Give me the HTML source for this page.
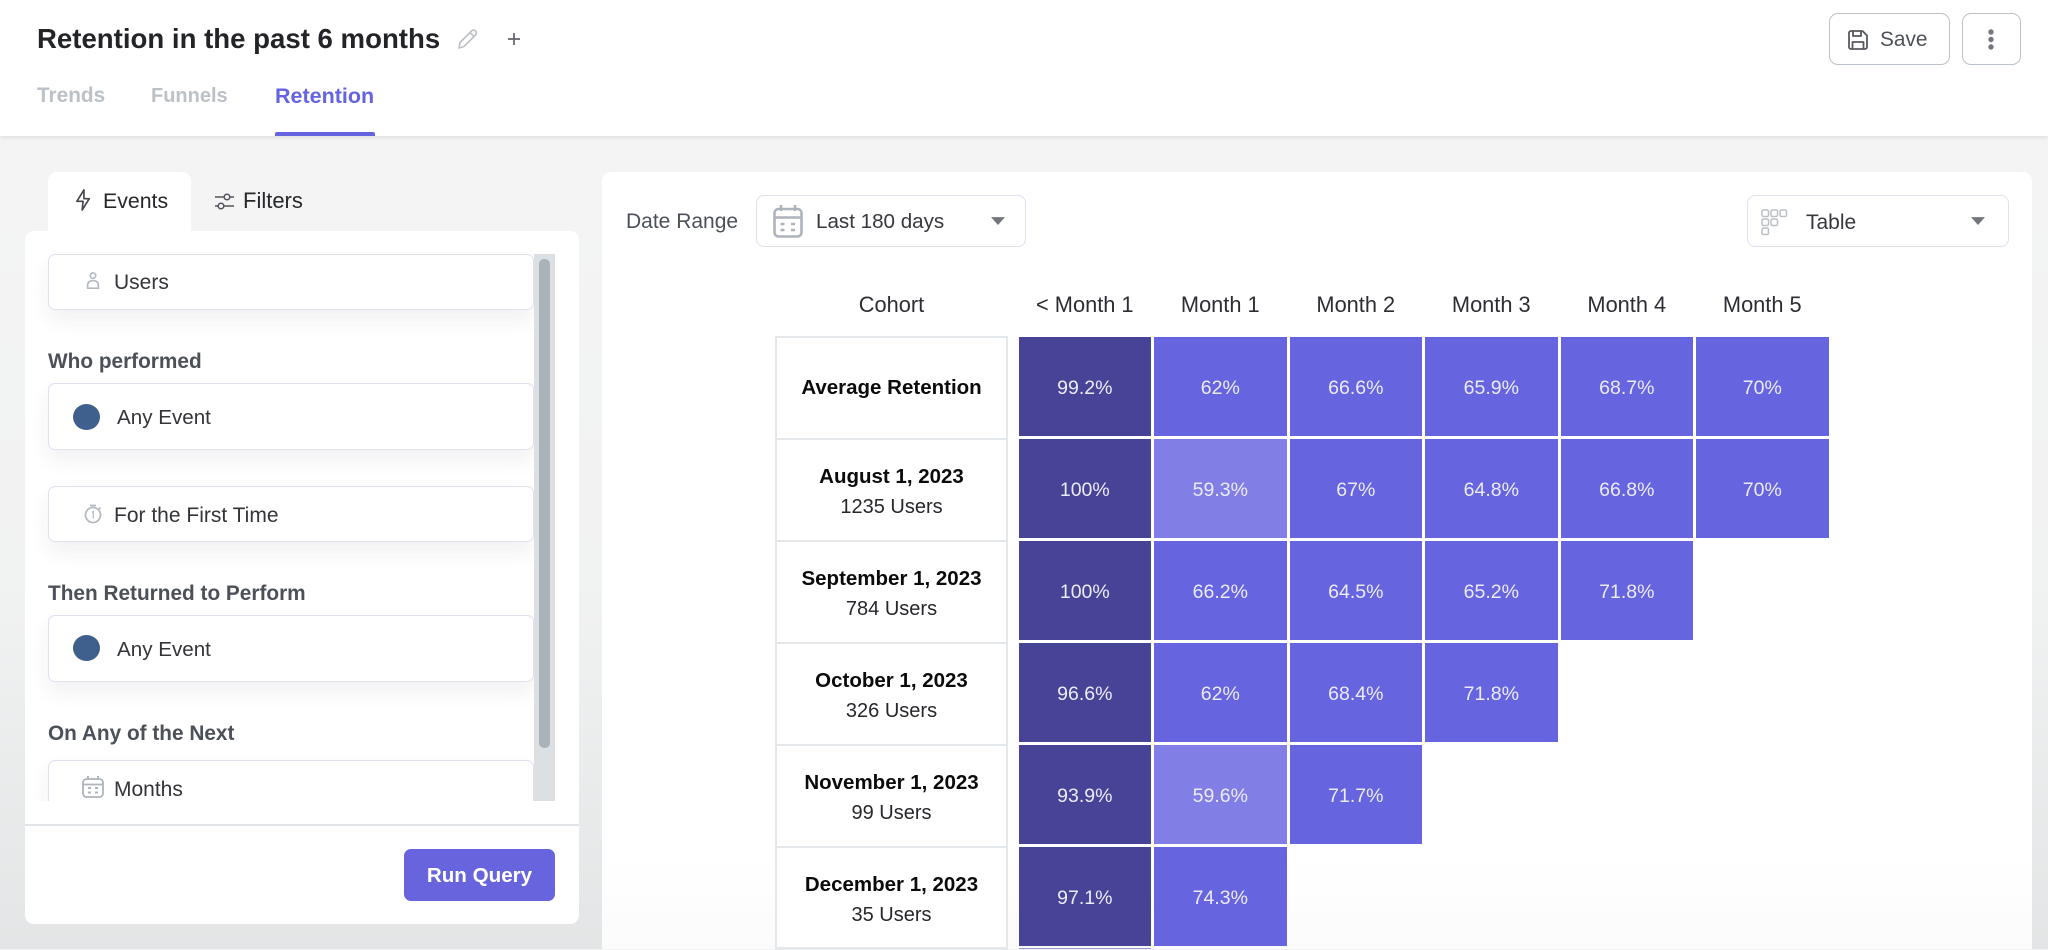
<!DOCTYPE html>
<html><head><meta charset="utf-8">
<style>
html,body{margin:0;padding:0;width:2048px;height:949px;overflow:hidden;background:#f2f3f3;font-family:"Liberation Sans",sans-serif;color:#2b2d33}
.a{position:absolute;white-space:nowrap}
.t{position:absolute;white-space:nowrap;line-height:24px;height:24px}
.box{position:absolute;left:23px;width:486px;background:#fff;border:1.500px solid #dfe1f0;border-radius:7px;box-shadow:0 10px 20px rgba(40,50,70,.065);box-sizing:border-box}
.lbl{font-size:20.800px;color:#4c5159;font-weight:bold;left:48px}
.v{font-size:21px;color:#33353a}
.c{position:absolute;width:132.6px;height:98.7px;line-height:103px;text-align:center;color:#ecebfb;font-size:19.5px;background:#6664de}
.d{background:#474497}
.l{background:#817fe5}
.co{position:absolute;left:775px;width:233px;height:103.9px;box-sizing:border-box;border:2px solid #e5e8ea;background:#fff;text-align:center;color:#000;font-size:20px;padding-top:21.500px;line-height:30px}
.co b{font-weight:bold;display:block;color:#0b0b0b;font-size:20.500px}
.co span{color:#25272b}
.h{position:absolute;top:293px;width:132.6px;text-align:center;font-size:21.800px;line-height:24px;color:#2c2e33}
svg{position:absolute;overflow:visible}
</style></head>
<body>
<div class="a" style="left:0;top:136px;width:2048px;height:813px;background:linear-gradient(to bottom,#f4f4f4 0%,#f1f2f2 55%,#e3e5e6 100%)"></div>
<!-- header -->
<div class="a" style="left:0;top:0;width:2048px;height:136px;background:#fff;box-shadow:0 2px 4px rgba(0,0,0,.08)"></div>
<div class="t" style="left:37px;top:25px;height:28px;line-height:28px;font-size:27.600px;font-weight:bold;color:#222428">Retention in the past 6 months</div>
<svg style="left:458px;top:29px" width="20" height="20" viewBox="0 0 20 20" fill="none" stroke="#bcc1c7" stroke-width="1.600" stroke-linejoin="round"><path d="M1 19l1-5.500L13.500 2c1.200-1.200 2.800-1.200 4 0s1.200 2.800 0 4L6 17.500z"/><path d="M12 3.500l4.500 4.500"/></svg>
<svg style="left:508px;top:33px" width="12" height="12" viewBox="0 0 12 12" stroke="#5f646b" stroke-width="1.700"><path d="M6 0v12M0 6h12"/></svg>
<div class="t" style="left:37px;top:84px;font-size:20.800px;font-weight:bold;color:#bcc1c8">Trends</div>
<div class="t" style="left:151px;top:84px;font-size:20px;font-weight:bold;color:#bcc1c8">Funnels</div>
<div class="t" style="left:275px;top:84px;font-size:21.500px;font-weight:bold;color:#6563e0">Retention</div>
<div class="a" style="left:275px;top:132px;width:100px;height:4px;background:#6563e0;border-radius:2px 2px 0 0"></div>
<!-- buttons -->
<div class="a" style="left:1829px;top:13px;width:121px;height:52px;box-sizing:border-box;border:1.500px solid #bcc2c9;border-radius:9px;background:#fff"></div>
<svg style="left:1848px;top:30px" width="20" height="20" viewBox="0 0 20 20" fill="none" stroke="#55595f" stroke-width="1.8" stroke-linejoin="round"><path d="M1 3a2 2 0 0 1 2-2h11.500L19 5.500V17a2 2 0 0 1-2 2H3a2 2 0 0 1-2-2z"/><path d="M5 1v5h8V1M4.500 19v-7h11v7"/></svg>
<div class="t" style="left:1880px;top:28px;font-size:20.800px;color:#4d5158">Save</div>
<div class="a" style="left:1962px;top:13px;width:59px;height:52px;box-sizing:border-box;border:1.500px solid #bcc2c9;border-radius:9px;background:#fff"></div>
<svg style="left:1985px;top:28px" width="12" height="24" viewBox="0 0 12 24" fill="#73777d"><circle cx="6" cy="4" r="2.700"/><circle cx="6" cy="11.500" r="2.700"/><circle cx="6" cy="19" r="2.700"/></svg>
<!-- left panel -->
<div class="a" style="left:48px;top:172px;width:143px;height:60px;background:#fff;border-radius:9px 9px 0 0"></div>
<div class="a" style="left:25px;top:231px;width:554px;height:693px;background:#fff;border-radius:9px"></div>
<svg style="left:76px;top:189px" width="15" height="22" viewBox="0 0 17 25" fill="none" stroke="#44484e" stroke-width="1.900" stroke-linejoin="round"><path d="M9 1L1 14h7l-1 10 8-13H9z"/></svg>
<div class="t" style="left:103px;top:189px;font-size:21.300px;color:#26282c">Events</div>
<svg style="left:215px;top:192px" width="19" height="20" viewBox="0 0 19 20" fill="none" stroke="#50545a" stroke-width="1.500"><path d="M0 5h9M15 5h4M0 14h3M9 14h10"/><circle cx="12" cy="5" r="2.800"/><circle cx="6" cy="14" r="2.800"/></svg>
<div class="t" style="left:243px;top:189px;font-size:22px;color:#26282c">Filters</div>

<div class="a" style="left:25px;top:254px;width:530px;height:547px;overflow:hidden">
 <div class="a" style="left:509px;top:0;width:21px;height:547px;background:#dde0e3"></div>
 <div class="a" style="left:514px;top:5px;width:11px;height:489px;background:#aab2ba;border-radius:5px"></div>
</div>
<div class="a" style="left:25px;top:254px;width:509px;height:547px;overflow:hidden">
 <div class="box" style="top:0;height:56px"></div>
 <div class="box" style="top:129px;height:67px"></div>
 <div class="box" style="top:232px;height:56px"></div>
 <div class="box" style="top:361px;height:67px"></div>
 <div class="box" style="top:506px;height:60px"></div>
</div>
<svg style="left:86px;top:272px" width="14" height="18" viewBox="0 0 15 20" fill="none" stroke="#b6bbc2" stroke-width="1.900"><circle cx="7.500" cy="4" r="3"/><path d="M1.500 18v-3.500C1.500 11.500 4 9.500 7.500 9.500s6 2 6 5V18z"/></svg>
<div class="t v" style="left:114px;top:271px">Users</div>
<div class="t lbl" style="top:350px">Who performed</div>
<div class="a" style="left:73px;top:404px;width:27px;height:26px;border-radius:50%;background:#3f5f8c"></div>
<div class="t v" style="left:117px;top:406px;font-size:20.600px">Any Event</div>
<svg style="left:84px;top:504px" width="18" height="20" viewBox="0 0 18 20" fill="none" stroke="#b6bbc2" stroke-width="1.800"><circle cx="9" cy="11" r="7.500"/><path d="M6 1.500h6M15 3.500l1.500 1.500" /><path d="M8 8.500l1.300-1v7" stroke-width="1.300"/></svg>
<div class="t v" style="left:114px;top:504px">For the First Time</div>
<div class="t lbl" style="top:582px">Then Returned to Perform</div>
<div class="a" style="left:73px;top:635px;width:27px;height:26px;border-radius:50%;background:#3f5f8c"></div>
<div class="t v" style="left:117px;top:638px;font-size:20.600px">Any Event</div>
<div class="t lbl" style="top:722px">On Any of the Next</div>
<svg style="left:82px;top:776px" width="22" height="22" viewBox="0 0 22 22" fill="none" stroke="#aeb4bc" stroke-width="1.800"><rect x="1" y="3" width="20" height="18" rx="3.500"/><path d="M1 8.500h20M6 0v4M16 0v4"/><path d="M6 12h3M13 12h3M6 16.500h3M13 16.500h3" stroke-width="2"/></svg>
<div class="t v" style="left:114px;top:778px">Months</div>
<div class="a" style="left:25px;top:824px;width:554px;height:1.500px;background:#e2e5e8"></div>
<div class="a" style="left:404px;top:849px;width:151px;height:52px;border-radius:7px;background:#6764dd;color:#fff;font-size:20.600px;line-height:53px;text-align:center;font-weight:bold">Run Query</div>

<!-- right panel -->
<div class="a" style="left:602px;top:172px;width:1430px;height:777px;background:linear-gradient(to bottom,#fff 88%,#fbfbfb 100%);border-radius:9px 9px 0 0"></div>
<div class="t" style="left:626px;top:210px;font-size:21px;color:#4c5159">Date Range</div>
<div class="a" style="left:756px;top:195px;width:270px;height:52px;box-sizing:border-box;border:1.500px solid #dfe1f0;border-radius:8px"></div>
<svg style="left:773px;top:205px" width="30" height="33" viewBox="0 0 30 33" fill="none" stroke="#aeb4bc" stroke-width="2.600"><rect x="1.500" y="4" width="27" height="27.500" rx="4"/><path d="M1.500 12.500h27M8 0v6M22 0v6"/><path d="M7.500 19h4M18 19h4M7.500 25h4M18 25h4" stroke-width="2.600"/></svg>
<div class="t" style="left:816px;top:210px;font-size:20.600px;color:#36383d">Last 180 days</div>
<svg style="left:991px;top:217px" width="14" height="8" viewBox="0 0 16 9" fill="#73777d"><path d="M0 0h16L8 9z"/></svg>
<div class="a" style="left:1747px;top:195px;width:262px;height:52px;box-sizing:border-box;border:1.500px solid #dfe1f0;border-radius:8px"></div>
<svg style="left:1761px;top:209px" width="27" height="26" viewBox="0 0 27 26" fill="none" stroke="#bcc0c6" stroke-width="1.500"><rect x="1" y="1" width="6.500" height="6.500" rx="1.500"/><rect x="10" y="1" width="6.500" height="6.500" rx="1.500"/><rect x="19" y="1" width="6.500" height="6.500" rx="1.500"/><rect x="1" y="10" width="6.500" height="6.500" rx="1.500"/><rect x="10" y="10" width="6.500" height="6.500" rx="1.500"/><rect x="1" y="19" width="6.500" height="6.500" rx="1.500"/></svg>
<div class="t" style="left:1806px;top:211px;font-size:21px;color:#36383d">Table</div>
<svg style="left:1971px;top:217px" width="14" height="8" viewBox="0 0 16 9" fill="#73777d"><path d="M0 0h16L8 9z"/></svg>

<!-- table header -->
<div class="h" style="left:775px;width:233px">Cohort</div>
<div class="h" style="left:1018.500px">&lt; Month 1</div>
<div class="h" style="left:1154px">Month 1</div>
<div class="h" style="left:1289.500px">Month 2</div>
<div class="h" style="left:1425px">Month 3</div>
<div class="h" style="left:1560.500px">Month 4</div>
<div class="h" style="left:1696px">Month 5</div>

<!-- cohort col -->
<div class="co" style="top:336px"><b style="padding-top:12px;line-height:32px">Average Retention</b></div>
<div class="co" style="top:438px"><b>August 1, 2023</b><span>1235 Users</span></div>
<div class="co" style="top:540px"><b>September 1, 2023</b><span>784 Users</span></div>
<div class="co" style="top:642px"><b>October 1, 2023</b><span>326 Users</span></div>
<div class="co" style="top:744px"><b>November 1, 2023</b><span>99 Users</span></div>
<div class="co" style="top:846px"><b>December 1, 2023</b><span>35 Users</span></div>

<!-- cells -->
<div class="c d" style="left:1018.500px;top:337px">99.2%</div>
<div class="c" style="left:1154px;top:337px">62%</div>
<div class="c" style="left:1289.500px;top:337px">66.6%</div>
<div class="c" style="left:1425px;top:337px">65.9%</div>
<div class="c" style="left:1560.500px;top:337px">68.7%</div>
<div class="c" style="left:1696px;top:337px">70%</div>

<div class="c d" style="left:1018.500px;top:439px">100%</div>
<div class="c l" style="left:1154px;top:439px">59.3%</div>
<div class="c" style="left:1289.500px;top:439px">67%</div>
<div class="c" style="left:1425px;top:439px">64.8%</div>
<div class="c" style="left:1560.500px;top:439px">66.8%</div>
<div class="c" style="left:1696px;top:439px">70%</div>

<div class="c d" style="left:1018.500px;top:541px">100%</div>
<div class="c" style="left:1154px;top:541px">66.2%</div>
<div class="c" style="left:1289.500px;top:541px">64.5%</div>
<div class="c" style="left:1425px;top:541px">65.2%</div>
<div class="c" style="left:1560.500px;top:541px">71.8%</div>

<div class="c d" style="left:1018.500px;top:643px">96.6%</div>
<div class="c" style="left:1154px;top:643px">62%</div>
<div class="c" style="left:1289.500px;top:643px">68.4%</div>
<div class="c" style="left:1425px;top:643px">71.8%</div>

<div class="c d" style="left:1018.500px;top:745px">93.9%</div>
<div class="c l" style="left:1154px;top:745px">59.6%</div>
<div class="c" style="left:1289.500px;top:745px">71.7%</div>

<div class="c d" style="left:1018.500px;top:847px">97.1%</div>
<div class="c" style="left:1154px;top:847px">74.3%</div>
<div class="a" style="left:1018.500px;top:948px;width:132.600px;height:1px;background:#9a98d8"></div>
<div class="a" style="left:775px;top:947px;width:233px;height:2px;background:#e5e8ea"></div>
</body></html>
